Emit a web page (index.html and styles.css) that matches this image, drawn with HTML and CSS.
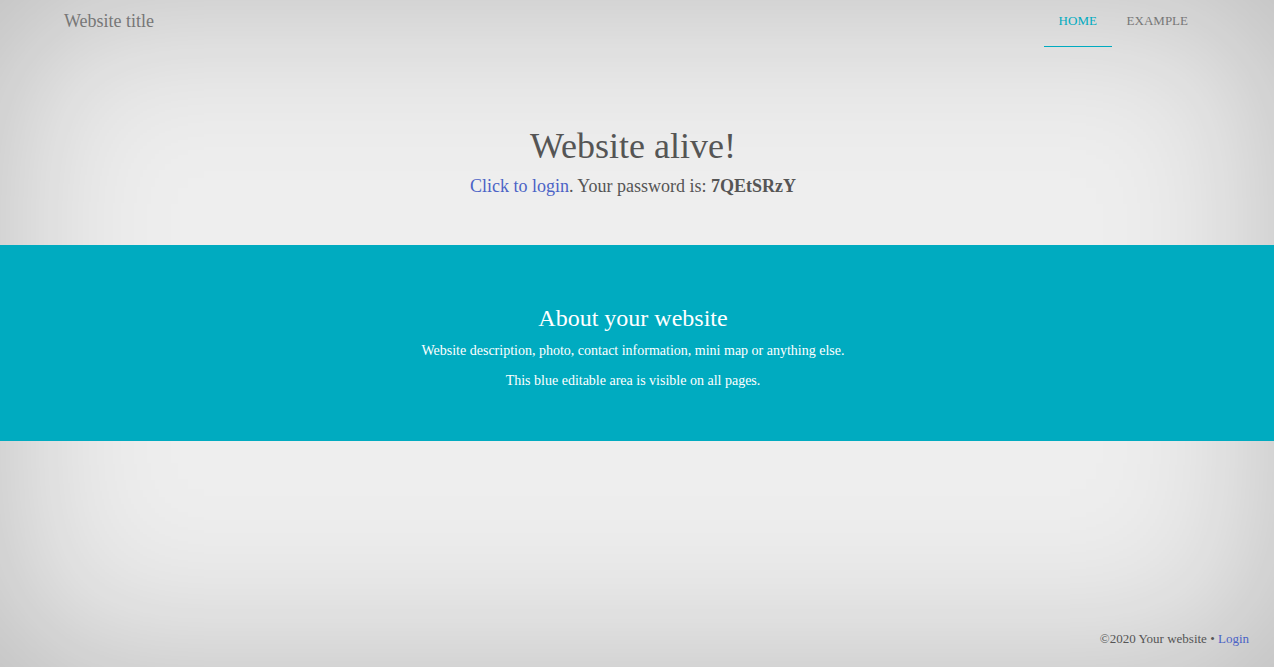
FILE: index.html
```
<!DOCTYPE html>
<html>
<head>
<meta charset="utf-8">
<link rel="stylesheet" href="styles.css">
</head>
<body>
<div class="page">
  <header class="topbar">
    <a class="brand" href="#">Website title</a>
    <nav class="menu">
      <a class="menu-item active" href="#">HOME</a>
      <a class="menu-item" href="#">EXAMPLE</a>
    </nav>
  </header>
  <section class="hero">
    <h1 class="hero-title">Website alive!</h1>
    <p class="hero-sub"><a class="link" href="#">Click to login</a>. Your password is: <b>7QEtSRzY</b></p>
  </section>
  <section class="about">
    <h2 class="about-title">About your website</h2>
    <p class="about-text">Website description, photo, contact information, mini map or anything else.</p>
    <p class="about-text">This blue editable area is visible on all pages.</p>
  </section>
  <div class="spacer"></div>
  <footer class="footer">©2020 Your website • <a class="link" href="#">Login</a></footer>
</div>
</body>
</html>
```
FILE: styles.css
```
html, body {
  margin: 0;
  padding: 0;
}
body {
  background: #eeeeee;
  font-family: "Liberation Serif", "Times New Roman", serif;
  color: #555555;
}
.page {
  min-height: 667px;
  display: flex;
  flex-direction: column;
  box-shadow: inset 0 0 170px rgba(0, 0, 0, 0.22);
}
.topbar {
  height: 47px;
  display: flex;
  align-items: flex-start;
  justify-content: space-between;
  padding: 0 71px 0 64px;
}
.brand {
  font-size: 18px;
  color: #777777;
  text-decoration: none;
  line-height: 42px;
}
.menu {
  display: flex;
  gap: 0;
}
.menu-item {
  display: block;
  font-size: 13px;
  color: #777777;
  text-decoration: none;
  padding: 0 15px;
  line-height: 42px;
  height: 46px;
}
.menu-item.active {
  color: #00abc0;
  box-shadow: inset 0 -1px 0 #00abc0;
  height: 47px;
  width: 38px;
}
.hero {
  text-align: center;
  padding: 75px 8px 45px 0;
}
.hero-title {
  font-size: 36px;
  font-weight: normal;
  margin: 0;
  line-height: 48px;
  color: #555555;
}
.hero-sub {
  font-size: 18px;
  margin: 2px 0 0;
  line-height: 28px;
}
.link {
  color: #4b63c6;
  text-decoration: none;
}
.about {
  background: #00abc0;
  color: #ffffff;
  text-align: center;
  padding: 58px 8px 40px 0;
}
.about-title {
  font-size: 24px;
  font-weight: normal;
  margin: 0 0 8px;
  line-height: 30px;
}
.about-text {
  font-size: 14px;
  margin: 0 0 10px;
  line-height: 20px;
}
.spacer {
  flex: 1;
}
.footer {
  text-align: right;
  font-size: 13px;
  padding: 0 25px 20px;
  line-height: 16px;
}
```
